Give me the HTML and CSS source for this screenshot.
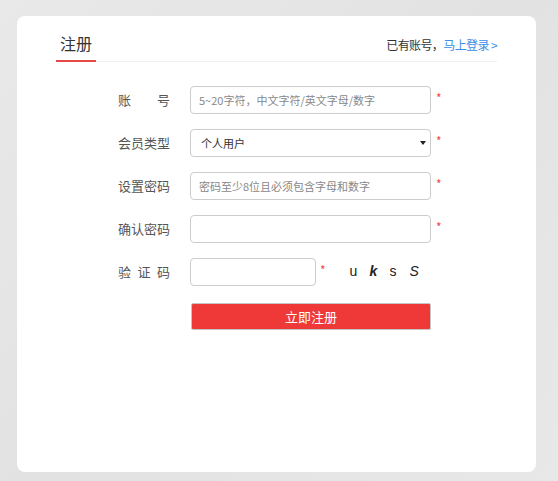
FILE: index.html
```html
<!DOCTYPE html>
<html lang="zh-CN">
<head>
    <meta charset="UTF-8">
    <meta name="viewport" content="width=device-width, initial-scale=1.0">
    <title>注册</title>
    <link rel="stylesheet" href="styles.css">
</head>
<body>
    <div class="register-card">
        <div class="card-head">
            <div class="tab">注册</div>
            <div class="login-tip">已有账号，<a href="/login">马上登录 &gt;</a></div>
        </div>
        <div class="form">
            <div class="form-row">
                <label class="label" for="account"><span>账</span><span>号</span></label>
                <input type="text" id="account" class="field" placeholder="5~20字符，中文字符/英文字母/数字">
                <span class="star">*</span>
            </div>
            <div class="form-row">
                <label class="label" for="type">会员类型</label>
                <div class="select-wrap">
                    <select id="type" class="field select">
                        <option>个人用户</option>
                        <option>企业用户</option>
                    </select>
                    <span class="arrow"></span>
                </div>
                <span class="star">*</span>
            </div>
            <div class="form-row">
                <label class="label" for="password">设置密码</label>
                <input type="password" id="password" class="field" placeholder="密码至少8位且必须包含字母和数字">
                <span class="star">*</span>
            </div>
            <div class="form-row">
                <label class="label" for="confirm">确认密码</label>
                <input type="password" id="confirm" class="field">
                <span class="star">*</span>
            </div>
            <div class="form-row">
                <label class="label" for="code"><span>验</span><span>证</span><span>码</span></label>
                <input type="text" id="code" class="field short">
                <span class="star star-short">*</span>
                <div class="captcha">
                    <span>u</span>
                    <span class="k">k</span>
                    <span>s</span>
                    <span class="cap-s">S</span>
                </div>
            </div>
            <button class="submit">立即注册</button>
        </div>
    </div>
</body>
</html>
```

FILE: styles.css
```css
* {
    margin: 0;
    padding: 0;
    box-sizing: border-box;
    font-family: "Noto Sans CJK SC", "Liberation Sans", sans-serif;
}

body {
    background: linear-gradient(135deg, #e9e9e9, #e2e2e2 50%, #e8e8e8);
}

.register-card {
    margin: 16px 22px 9px 17px;
    height: 456px;
    background: white;
    border-radius: 8px;
    padding: 0 39px;
}

.card-head {
    display: flex;
    justify-content: space-between;
    align-items: flex-end;
    padding-top: 16px;
    border-bottom: 1px solid #f0f0f0;
}

.tab {
    padding: 0 4px 6px;
    margin-bottom: -1px;
    font-size: 16px;
    line-height: 22px;
    color: #333;
    border-bottom: 2px solid #e94848;
}

.login-tip {
    font-size: 12px;
    line-height: 16px;
    letter-spacing: -0.6px;
    color: #333;
    padding-bottom: 8px;
}

.login-tip a {
    color: #3a8ee6;
    text-decoration: none;
}

.form {
    margin-top: 24px;
    padding-left: 62px;
}

.form-row {
    display: flex;
    align-items: center;
    height: 28px;
    margin-bottom: 15px;
}

.label {
    display: flex;
    justify-content: space-between;
    width: 52px;
    margin-right: 20px;
    margin-top: -2px;
    font-size: 13px;
    color: #555;
}

.field {
    width: 241px;
    height: 28px;
    border: 1px solid #ccc;
    border-radius: 4px;
    padding: 0 8px;
    font-size: 11px;
    color: #333;
    outline: none;
    background: white;
}

.field::placeholder {
    color: #888;
}

.field.short {
    width: 126px;
}

.select-wrap {
    position: relative;
}

.select {
    appearance: none;
    -webkit-appearance: none;
    padding-left: 10px;
}

.arrow {
    position: absolute;
    right: 5px;
    top: 12px;
    border-left: 3px solid transparent;
    border-right: 3px solid transparent;
    border-top: 4px solid #222;
}

.star {
    margin-left: 5px;
    margin-top: -4px;
    color: #f04848;
    font-size: 12px;
    line-height: 12px;
}

.star-short {
    margin-left: 4px;
}

.captcha {
    display: flex;
    margin-left: 24px;
    margin-top: -2px;
    font-size: 14px;
    color: #222;
}

.captcha span {
    width: 20px;
    font-family: "Liberation Sans", sans-serif;
}

.captcha .k {
    font-weight: bold;
    font-style: italic;
}

.captcha .cap-s {
    font-style: italic;
}

.submit {
    display: block;
    margin: 17px 0 0 73px;
    width: 240px;
    height: 27px;
    background: #ef3939;
    border: 1px solid #c4c4c4;
    border-radius: 2px;
    color: white;
    font-size: 13px;
    cursor: pointer;
}
```
